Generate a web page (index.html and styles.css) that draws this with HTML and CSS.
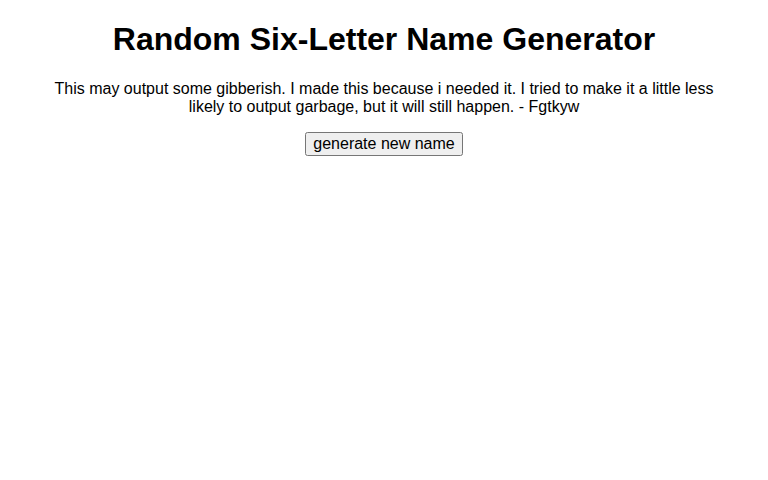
FILE: index.html
```html
<!DOCTYPE html>
<html lang="en">

<head>
    <meta charset="UTF-8" />
    <meta name="viewport" content="width=device-width, initial-scale=1.0" />
    <title>Random Six-Letter Name Generator</title>
    <link rel="stylesheet" href="styles.css">
</head>

<body>
    <h1>Random Six-Letter Name Generator</h1>
    <p class="intro">This may output some gibberish. I made this because i needed it. I tried to make it a little less likely to output garbage, but it will still happen. - Fgtkyw</p>
    <button id="generate">generate new name</button>
    <p class="output" id="output"></p>

    <script>
        const btn = document.querySelector("#generate");
        const output = document.querySelector("#output");

        const vowels = "aeiou";
        const consonants = "bcdfghjklmnprstvwz";

        function pick(str) {
            return str[Math.floor(Math.random() * str.length)];
        }

        function makeName() {
            let name = "";
            for (let i = 0; i < 6; i++) {
                name += i % 2 == 0 ? pick(consonants) : pick(vowels);
            }
            return name[0].toUpperCase() + name.slice(1);
        }

        btn.addEventListener("click", () => {
            output.textContent = makeName();
        });
    </script>
</body>

</html>
```

FILE: styles.css
```css
body {
    margin: 0 8px 8px;
    font-family: "Liberation Sans", Arial, sans-serif;
    text-align: center;
}

h1 {
    font-size: 2em;
}

.intro {
    max-width: 680px;
    margin-left: auto;
    margin-right: auto;
}

button {
    font-family: "Liberation Sans", Arial, sans-serif;
    font-size: 16px;
}
```
